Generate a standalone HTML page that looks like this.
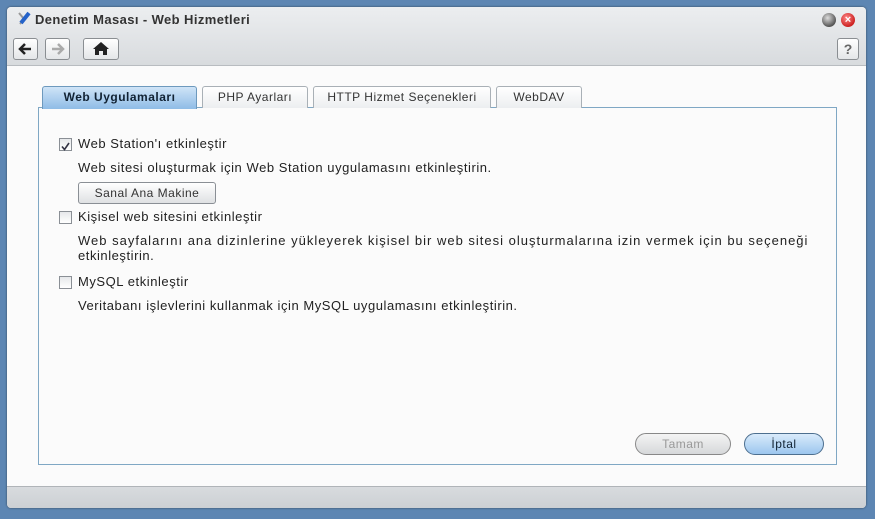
<!DOCTYPE html>
<html><head><meta charset="utf-8"><style>
body{margin:0;width:875px;height:519px;background:#5d86b3;position:relative;overflow:hidden;font-family:"Liberation Sans","DejaVu Sans",sans-serif;}
.win{position:absolute;left:7px;top:7px;width:859px;height:501px;background:#dfe2e5;border-radius:4px;overflow:hidden;box-shadow:0 0 2px #345;}
.tb{position:absolute;left:0;top:0;right:0;height:58px;background:linear-gradient(#eceef0,#d8dbde);border-bottom:1px solid #b8bcc0;}
.title{position:absolute;left:28px;top:5px;font-size:13px;font-weight:bold;color:#333;letter-spacing:0.4px}
.nb{position:absolute;top:31px;height:20px;border:1px solid #8a8e92;border-radius:3px;background:linear-gradient(#fff,#e4e6e8);}
.content{position:absolute;left:0;top:59px;right:0;height:420px;background:#fbfbfb;}
.foot{position:absolute;left:0;top:479px;right:0;bottom:0;background:linear-gradient(#d8dbde,#ccd0d4);border-top:1px solid #b0b4b8;}
.tab{position:absolute;top:79px;height:21px;border:1px solid #a9b0b6;border-bottom:none;border-radius:3px 3px 0 0;background:linear-gradient(#fff,#eceef0);font-size:12px;color:#333;text-align:center;line-height:21px;letter-spacing:0.5px}
.panel{position:absolute;left:31px;top:100px;width:797px;height:356px;border:1px solid #7fa7c4;background:#fbfbfb;}
.t{position:absolute;font-size:13px;color:#222;white-space:nowrap;letter-spacing:0.55px}
.cb{position:absolute;width:11px;height:11px;border:1px solid #8a8f95;background:linear-gradient(#e6e8ea,#fff);}
.btn{position:absolute;border-radius:11px;font-size:12px;text-align:center;line-height:20px;height:20px;letter-spacing:0.5px}
</style></head><body>
<div class="win">
 <div class="tb">
  <svg style="position:absolute;left:9px;top:4px" width="16" height="16" viewBox="0 0 16 16"><path d="M3 2 L8 8 L4 13" stroke="#999" stroke-width="2" fill="none"/><path d="M13 2 L5 12" stroke="#2563c9" stroke-width="4"/></svg>
  <div class="title">Denetim Masası - Web Hizmetleri</div>
  <div class="nb" style="left:6px;width:23px"><svg width="23" height="20" viewBox="0 0 23 20"><path d="M17 10H7M11 5L6 10L11 15" stroke="#222" stroke-width="2.5" fill="none"/></svg></div>
  <div class="nb" style="left:38px;width:23px"><svg width="23" height="20" viewBox="0 0 23 20"><path d="M6 10H16M12 5L17 10L12 15" stroke="#aaa" stroke-width="2.5" fill="none"/></svg></div>
  <div class="nb" style="left:76px;width:34px"><svg width="34" height="20" viewBox="0 0 34 20"><path d="M17 3L9 10H11V16H15V12H19V16H23V10H25Z" fill="#222"/></svg></div>
  <div style="position:absolute;left:815px;top:6px;width:14px;height:14px;border-radius:50%;background:radial-gradient(circle at 40% 35%,#ddd,#555 70%);"></div>
  <div style="position:absolute;left:834px;top:6px;width:14px;height:14px;border-radius:50%;background:radial-gradient(circle at 40% 35%,#f88,#c22 70%);color:#fff;font-size:11px;line-height:14px;text-align:center;font-weight:bold">×</div>
  <div class="nb" style="left:830px;width:20px;font-weight:bold;color:#666;font-size:14px;text-align:center;line-height:20px">?</div>
 </div>
 <div class="content"></div>
 <div class="panel"></div>
 <div class="tab" style="left:35px;width:153px;background:linear-gradient(#cfe4f7,#8fbce6);border-color:#6d99bd;font-weight:bold;color:#123;height:22px">Web Uygulamaları</div>
 <div class="tab" style="left:195px;width:104px">PHP Ayarları</div>
 <div class="tab" style="left:306px;width:176px">HTTP Hizmet Seçenekleri</div>
 <div class="tab" style="left:489px;width:84px">WebDAV</div>
 <div class="cb" style="left:52px;top:131px"><svg width="11" height="11" viewBox="0 0 11 11"><path d="M2 5.5L4.5 8.5L9 2" stroke="#334" stroke-width="1.6" fill="none"/></svg></div>
 <div class="t" style="left:71px;top:129px">Web Station'ı etkinleştir</div>
 <div class="t" style="left:71px;top:153px">Web sitesi oluşturmak için Web Station uygulamasını etkinleştirin.</div>
 <div style="position:absolute;left:71px;top:175px;width:136px;height:20px;border:1px solid #8a8f95;border-radius:3px;background:linear-gradient(#fff,#dfe1e3);font-size:12px;text-align:center;line-height:20px;color:#333;letter-spacing:0.5px">Sanal Ana Makine</div>
 <div class="cb" style="left:52px;top:204px"></div>
 <div class="t" style="left:71px;top:202px">Kişisel web sitesini etkinleştir</div>
 <div class="t" style="left:71px;top:226px;letter-spacing:1.0px">Web sayfalarını ana dizinlerine yükleyerek kişisel bir web sitesi oluşturmalarına izin vermek için bu seçeneği</div>
 <div class="t" style="left:71px;top:241px">etkinleştirin.</div>
 <div class="cb" style="left:52px;top:269px"></div>
 <div class="t" style="left:71px;top:267px">MySQL etkinleştir</div>
 <div class="t" style="left:71px;top:291px">Veritabanı işlevlerini kullanmak için MySQL uygulamasını etkinleştirin.</div>
 <div class="btn" style="left:628px;top:426px;width:94px;border:1px solid #888;background:linear-gradient(#f4f4f4,#d6d8da);color:#999">Tamam</div>
 <div class="btn" style="left:737px;top:426px;width:78px;border:1px solid #4d6f8f;background:linear-gradient(#d9ebfb,#9cc6ee);color:#123">İptal</div>
 <div class="foot"></div>
</div>
</body></html>
